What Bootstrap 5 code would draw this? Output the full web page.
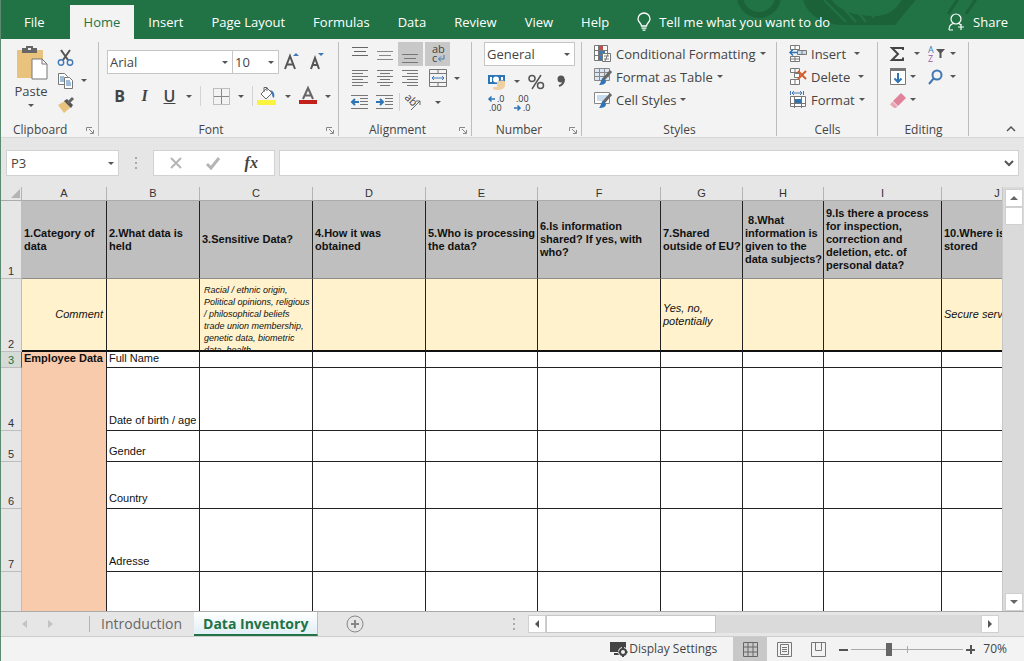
<!DOCTYPE html>
<html lang="en">
<head>
<meta charset="utf-8">
<meta name="viewport" content="width=device-width, initial-scale=1">
<title>Data Inventory</title>
<link href="https://cdn.jsdelivr.net/npm/bootstrap@5.3.0/dist/css/bootstrap.min.css" rel="stylesheet">
<style>
body { font-family: "Open Sans", "Noto Sans", sans-serif; font-size: 13px; line-height: 18px; color: #444; background: #e6e6e6; }
button, select, input { font: inherit; color: inherit; border: 0; background: none; padding: 0; }
svg { display: block; flex: none; overflow: visible; }
.app { border-left: 1px solid #5b8a70; }

/* title tabs */
.tabs-bar { background: #217346; height: 39px; }
.deco { z-index: 0; }
.tabs-bar .nav { z-index: 1; }
.tabs-bar .nav-link { color: #fff; padding: 8px 14px; line-height: 18px; border-radius: 0; }
.tabs-bar .nav-link.active { background: #f3f3f3; color: #217346; }
.tabs-bar .nav-link.first-tab { padding-left: 23px; padding-right: 25px; }

/* ribbon */
.ribbon { background: #f3f3f3; height: 99px; padding: 3px 0 0; border-bottom: 1px solid #d8d8d8; }
.group { flex: none; background: linear-gradient(#bdbdbd, #bdbdbd) right top / 1px 94px no-repeat; }
.group-body { height: 81px; flex: none; }
.group-name { font-size: 12px; line-height: 14px; }
.launch { right: 5px; bottom: 0; }
.w-clip { width: 98px; } .w-font { width: 240px; } .w-align { width: 133px; } .w-num { width: 110px; }
.w-styles { width: 195px; } .w-cells { width: 101px; } .w-edit { width: 91px; }
.caret { width: 0; height: 0; border: 3px solid transparent; border-top-color: #555; border-bottom: 0; flex: none; display: inline-block; }
.vsep { width: 1px; height: 20px; background: #d4d4d4; }
.box { background-color: #fff; border: 1px solid #c6c6c6; appearance: none; border-radius: 0; padding: 0 2px; height: 24px;
  background-image: url("data:image/svg+xml,%3Csvg xmlns='http://www.w3.org/2000/svg' width='6' height='3'%3E%3Cpath d='M0 0h6L3 3z' fill='%23555'/%3E%3C/svg%3E"); background-repeat: no-repeat; background-position: right 4px center; }
.box-font { width: 126px; } .box-size { width: 47px; margin-left: -1px; } .box-num { width: 91px; }
.ink { color: #444; font-size: 16px; line-height: 20px; width: 25px; }
.align-grid { display: grid; grid-template-columns: 25px 25px 26px 29px 10px; grid-auto-rows: 24px; justify-items: center; align-items: center; }
.align-grid button { height: 24px; display: grid; place-items: center; width: 25px; }
.pressed { background: #c8c8c8; }
.tool-row { height: 23px; white-space: nowrap; }
.edit-grid { display: grid; grid-template-columns: 38px 38px; grid-auto-rows: 23px; align-items: center; }

/* formula bar */
.formula-bar { height: 49px; padding: 12px 5px 11px 5px; }
.white-box { background: #fff; border: 1px solid #d2d2d2; height: 26px; }
.name-box { width: 113px; } .fx-box { width: 122px; }
.name-box input { width: 80px; }
.dots { color: #aaa; width: 34px; }

/* sheet */
.sheet-area { min-height: 0; }
.sheet-view { min-width: 0; }
.sheet { table-layout: fixed; width: 1052px; border-collapse: separate; border-spacing: 0; font-family: "Liberation Sans", Arial, sans-serif; font-size: 11px; line-height: 13px; color: #111; }
.sheet th, .sheet td { padding: 0 0 0 2px; border-right: 1px solid #222; border-bottom: 1px solid #222; }
.sheet td { background: #fff; vertical-align: bottom; padding-bottom: 3px; white-space: nowrap; }
.sheet thead th { font-weight: 400; height: 14px; line-height: 13px; padding: 0; text-align: center; background: #e6e6e6; border-bottom-color: #ababab; border-right-color: #b4b4b4; color: #333; }
.sheet tbody th { font-weight: 400; background: #e6e6e6; border-color: #bdbdbd; padding: 0; text-align: center; vertical-align: bottom; color: #333; }
.sheet tbody th.picked { background: #d5dcd7; color: #217346; border-right-color: #217346; }
.sheet .titles td { background: #bfbfbf; font-weight: 700; vertical-align: middle; border-bottom-color: #8c8c8c; padding-bottom: 0; }
.sheet .notes td { background: #fff2cc; font-style: italic; vertical-align: middle; border-bottom: 2px solid #111; padding-bottom: 0; }
.sheet .notes .fine { font-size: 9px; line-height: 12px; height: 66px; margin-top: 5px; padding-left: 2px; overflow: hidden; }
.sheet td.staff { background: #f8cbad; font-weight: 700; vertical-align: top; }
.sheet .note-right { text-align: right; padding-right: 3px; }
.sheet .h3r td { padding-bottom: 2px; }
.h1r { height: 78px; } .h2r { height: 73px; } .h3r { height: 16px; } .h4r { height: 63px; }
.h5r { height: 31px; } .h6r { height: 47px; } .h7r { height: 63px; } .h8r { height: 63px; }
.vbar { width: 22px; background: #dadada; border-left: 1px solid #c6c6c6; padding: 2px 2px 0; flex: none; }
.bar-btn { background: #fff; border: 1px solid #d0d0d0; width: 18px; height: 18px; display: grid; place-items: center; flex: none; }

/* sheet tabs */
.sheet-tabs { height: 26px; border-top: 1px solid #ababab; border-bottom: 1px solid #cdcdcd; background: #e6e6e6; }
.sheet-tabs .nav-link { color: #666; font-size: 14px; line-height: 20px; padding: 2px 12px 0 11px; border-radius: 0; height: 24px; }
.sheet-tabs .nav-link.active { background: linear-gradient(#fff, #e2eff5); color: #217346; font-weight: 700; border-right: 1px solid #bdbdbd; border-bottom: 2px solid #217346; padding: 2px 9px 0; }
.arrows { width: 89px; padding-left: 21px; gap: 20px; border-right: 1px solid #b4b4b4; }
.hbar { width: 46%; margin-right: 25px; }
.htrack { background: #dadada; height: 18px; }
.hthumb { width: 39%; height: 18px; background: #fff; border: 1px solid #c6c6c6; }

/* status bar */
.status { height: 24px; background: #f3f3f3; font-size: 12px; padding-right: 17px; }
.view-btn { width: 34px; height: 24px; display: grid; place-items: center; }
.zoom-range { appearance: none; width: 112px; height: 16px; margin: 0 3px; background: linear-gradient(#aaa, #aaa) 50% 50% / 1px 7px no-repeat, linear-gradient(#aaa, #aaa) center / 100% 1px no-repeat; }
.zoom-range::-webkit-slider-thumb { appearance: none; width: 6px; height: 13px; background: #666; }
</style>
<script src="https://cdn.jsdelivr.net/npm/bootstrap@5.3.0/dist/js/bootstrap.bundle.min.js"></script>
</head>
<body>
<div class="app d-flex flex-column vh-100 overflow-hidden">

<header class="tabs-bar position-relative d-flex align-items-end overflow-hidden flex-shrink-0">
  <svg class="deco position-absolute top-0 end-0" width="344" height="39" fill="none" stroke="#1c6239">
    <path d="M60-4a19 19 0 0 0 38 0" stroke-width="6"/><path d="M122-4c4 20 22 30 48 29h45l24-29h-16c-4 12-14 20-28 20-22 0-38-6-46-20z" fill="#1c6239" stroke="none"/>
    <path d="M144 0l22 22M156 0l20 22M168 0l18 22M180 0l14 18M192 0l10 14" stroke="#217346" stroke-width="2"/><path d="M268 14l12-18M286 14l12-18" stroke-width="3"/>
  </svg>
  <nav class="nav flex-nowrap position-relative">
    <a class="nav-link first-tab" href="#">File</a>
    <a class="nav-link active" href="#">Home</a>
    <a class="nav-link" href="#">Insert</a>
    <a class="nav-link" href="#">Page Layout</a>
    <a class="nav-link" href="#">Formulas</a>
    <a class="nav-link" href="#">Data</a>
    <a class="nav-link" href="#">Review</a>
    <a class="nav-link" href="#">View</a>
    <a class="nav-link" href="#">Help</a>
    <a class="nav-link d-flex align-items-center gap-2" href="#">
      <svg width="14" height="18" fill="none" stroke="#fff" stroke-width="1.3"><path d="M4.500 13c0-3-3.500-3.500-3.500-7a6 6 0 0 1 12 0c0 3.500-3.500 4-3.500 7zM4.500 15.200h5M5.500 17.200h3"/></svg>Tell me what you want to do</a>
  </nav>
  <a class="nav-link position-relative ms-auto d-flex align-items-center gap-2 text-white pe-3" href="#">
    <svg width="17" height="18" fill="none" stroke="#fff" stroke-width="1.200"><circle cx="8" cy="6" r="5"/><path d="M1 17c0-4 2-6 4.500-6.500M11 10.500l2 1.500M13 11v6M10 14h6M1 17h4"/></svg>Share</a>
</header>

<section class="ribbon d-flex flex-shrink-0" aria-label="Ribbon">
  <div class="group w-clip d-flex flex-column position-relative">
    <div class="group-body d-flex">
      <button class="d-flex flex-column align-items-center ms-2 me-1 pt-1" style="width:44px">
        <svg width="34" height="36"><path d="M3 4h26v28H3z" fill="#e9c27d"/><path d="M8 2h4V0h7v2h4v5H8z" fill="#666"/><path d="M14 2h3v2h-3z" fill="#eee"/><path d="M18 13h10l5 5v15H18z" fill="#fff" stroke="#777"/><path d="M28 13v5h5" fill="none" stroke="#777"/></svg>
        <span>Paste</span><span class="caret mt-1"></span>
      </button>
      <div class="d-flex flex-column pt-1">
        <button class="tool-row" aria-label="Cut"><svg width="18" height="18" fill="none"><path d="M4 1l7 10M13 1L6 11" stroke="#555" stroke-width="2"/><circle cx="4" cy="13.500" r="2.700" stroke="#3f78b5" stroke-width="1.400"/><circle cx="13" cy="13.500" r="2.700" stroke="#3f78b5" stroke-width="1.400"/></svg></button>
        <button class="tool-row d-flex align-items-center gap-2" aria-label="Copy"><svg width="16" height="18" fill="#fff" stroke="#777"><path d="M1.500 1.500h6l3 3v8h-9z"/><path d="M3 5h4M3 7h4M3 9h4" stroke="#3f78b5"/><path d="M7.500 5.500h5l3 3v8h-8z"/><path d="M9 9h4M9 11h5M9 13h5" stroke="#3f78b5"/></svg><span class="caret"></span></button>
        <button class="tool-row" aria-label="Format painter"><svg width="18" height="20"><path d="M1 11l7-4 6 6-7 6z" fill="#e9c27d"/><path d="M7 7l3-2 6 6-2 3z" fill="#555"/><path d="M11 9l5-5" stroke="#666" stroke-width="3"/></svg></button>
      </div>
    </div>
    <div class="group-name ps-2"><span class="ps-1">Clipboard</span></div>
    <svg class="launch position-absolute" width="8" height="14" fill="none" stroke="#888"><path d="M.5 8V4.500H6M3 6l4 4M7.500 7v3.500H4"/></svg>
  </div>

  <div class="group w-font d-flex flex-column position-relative">
    <div class="group-body px-2 pt-2">
      <div class="d-flex align-items-center">
        <select class="box box-font" aria-label="Font"><option>Arial</option></select>
        <select class="box box-size" aria-label="Font size"><option>10</option></select>
        <button class="ink" aria-label="Increase font size"><svg width="17" height="18" class="m-auto"><path d="M2 16L7 3l5 13M4 11.500h6" fill="none" stroke="#555" stroke-width="2"/><path d="M10 3l3-3 3 3z" fill="#3f78b5"/></svg></button>
        <button class="ink" aria-label="Decrease font size"><svg width="17" height="18" class="m-auto"><path d="M3 16L7 5l4 11M4.500 12h5" fill="none" stroke="#555" stroke-width="2"/><path d="M10 0l3 3 3-3z" fill="#3f78b5"/></svg></button>
      </div>
      <div class="d-flex align-items-center pt-2 mt-1">
        <button class="ink fw-bold">B</button>
        <button class="ink fst-italic fw-bold" style="font-family:'Liberation Serif',serif">I</button>
        <button class="ink text-decoration-underline fw-semibold">U</button>
        <span class="caret ms-1"></span><span class="vsep mx-2"></span>
        <button class="px-1" aria-label="Borders"><svg width="17" height="17" fill="none" stroke="#888"><path d="M.5.5h16v16H.5z" stroke-dasharray="1 1"/><path d="M8.500 1v15M1 8.500h15"/></svg></button>
        <span class="caret ms-1"></span><span class="vsep ms-2 me-1"></span>
        <button aria-label="Fill colour"><svg width="20" height="20"><path d="M0 14h19v5H0z" fill="#fbf43c"/><path d="M4 8l6-6 5 5-6 6zM7 6V1.500h3V5" fill="#fff" stroke="#666"/><path d="M13 4c4 1 5 4 4 8-2-1-2-3-2-5z" fill="#3f78b5"/></svg></button>
        <span class="caret ms-2"></span>
        <button class="ms-2" aria-label="Font colour"><svg width="18" height="20"><path d="M4 13L9 2l5 11M6 9.500h6" fill="none" stroke="#666" stroke-width="2"/><path d="M0 14h18v4H0z" fill="#c3201c"/></svg></button>
        <span class="caret ms-2"></span>
      </div>
    </div>
    <div class="group-name text-center pe-3">Font</div>
    <svg class="launch position-absolute" width="8" height="14" fill="none" stroke="#888"><path d="M.5 8V4.500H6M3 6l4 4M7.500 7v3.500H4"/></svg>
  </div>

  <div class="group w-align d-flex flex-column position-relative">
    <div class="group-body ps-2">
      <div class="align-grid">
        <button aria-label="Top align"><svg width="16" height="16" stroke="#666"><path d="M0 1.500h16M2 5.500h12M0 9.500h16"/></svg></button>
        <button aria-label="Middle align"><svg width="16" height="16" stroke="#888"><path d="M0 5.500h16M2 9.500h12M0 13.500h16"/></svg></button>
        <button class="pressed" aria-label="Bottom align"><svg width="16" height="18" stroke="#777"><path d="M0 9.500h16M2 13.500h12M0 17.500h16"/></svg></button>
        <button class="pressed" aria-label="Wrap text"><svg width="18" height="20" font-size="11" fill="#444"><text x="3" y="9">ab</text><text x="3" y="18">c</text><path d="M15 11v4h-5M12 12.500L9.500 15l2.500 2.500" fill="none" stroke="#3f78b5"/></svg></button><span></span>
        <button aria-label="Align left"><svg width="16" height="18" stroke="#777"><path d="M0 1.500h16M0 4.500h11M0 7.500h16M0 10.500h11M0 13.500h16M0 16.500h11"/></svg></button>
        <button aria-label="Centre"><svg width="16" height="18" stroke="#777"><path d="M0 1.500h16M3 4.500h10M0 7.500h16M3 10.500h10M0 13.500h16M3 16.500h10"/></svg></button>
        <button aria-label="Align right"><svg width="16" height="18" stroke="#777"><path d="M0 1.500h16M5 4.500h11M0 7.500h16M5 10.500h11M0 13.500h16M5 16.500h11"/></svg></button>
        <button aria-label="Merge"><svg width="18" height="18" fill="none" stroke="#777"><path d="M.5.5h17v17H.5zM.5 4.500h17M.5 13.500h17M9 0v4M9 14v4"/><path d="M3 9h12M5 7L3 9l2 2M13 7l2 2-2 2" stroke="#3f78b5"/></svg></button><span class="caret"></span>
        <button aria-label="Decrease indent"><svg width="17" height="16" stroke="#777"><path d="M0 1.500h17M9 4.500h8M9 7.500h8M9 10.500h8M0 14.500h17"/><path d="M8 8H1M4 5L1 8l3 3" fill="none" stroke="#2e75b6" stroke-width="2"/></svg></button>
        <button aria-label="Increase indent"><svg width="17" height="16" stroke="#777"><path d="M0 1.500h17M9 4.500h8M9 7.500h8M9 10.500h8M0 14.500h17"/><path d="M0 8h7M4 5l3 3-3 3" fill="none" stroke="#2e75b6" stroke-width="2"/></svg></button>
        <button aria-label="Orientation"><svg width="24" height="18"><path d="M1.500 0v18" stroke="#d4d4d4"/><text x="6" y="9" font-size="11" fill="#444" transform="rotate(45 11 7)">ab</text><path d="M13 17l9-9M18 8h4v4" fill="none" stroke="#666"/></svg></button>
        <span class="caret"></span>
      </div>
    </div>
    <div class="group-name text-center pe-3">Alignment</div>
    <svg class="launch position-absolute" width="8" height="14" fill="none" stroke="#888"><path d="M.5 8V4.500H6M3 6l4 4M7.500 7v3.500H4"/></svg>
  </div>

  <div class="group w-num d-flex flex-column position-relative">
    <div class="group-body ps-2">
      <select class="box box-num ms-1" aria-label="Number format"><option>General</option></select>
      <div class="d-flex align-items-center gap-2 tool-row ps-1 mt-1">
        <button class="ps-1" aria-label="Currency"><svg width="18" height="18"><path d="M0 2h17v9H0z" fill="#2e75b6"/><circle cx="8" cy="6.500" r="3" fill="#fff"/><path d="M2 4h2v5H2zM13 4h2v3h-2z" fill="#fff"/><path d="M9 9c3-2 8-2 8 0v4c-1 4-8 5-12 3v-2h4z" fill="#f0cfa0"/></svg></button>
        <span class="caret"></span>
        <button aria-label="Percent"><svg width="17" height="16" fill="none" stroke="#555" stroke-width="1.500"><circle cx="4" cy="4.500" r="3"/><circle cx="12.500" cy="11.500" r="3"/><path d="M13 1L4 15"/></svg></button>
        <button class="ps-1" aria-label="Comma"><svg width="8" height="14"><circle cx="4" cy="4" r="3.500" fill="#555"/><path d="M7 4c0 4-2 6-5 7" fill="none" stroke="#555" stroke-width="2"/></svg></button>
      </div>
      <div class="d-flex gap-2 ps-1">
        <button class="ps-1" aria-label="Increase decimal"><svg width="18" height="20" font-size="9" fill="#333"><text x="9" y="9">.0</text><text x="1" y="18">.00</text><path d="M7 6H1M3.500 3.500L1 6l2.500 2.500" stroke="#2e75b6" stroke-width="1.500" fill="none"/></svg></button>
        <button aria-label="Decrease decimal"><svg width="18" height="20" font-size="9" fill="#333"><text x="2" y="9">.00</text><text x="9" y="18">.0</text><path d="M0 15h6M3.500 12.500L6 15l-2.500 2.500" stroke="#2e75b6" stroke-width="1.500" fill="none"/></svg></button>
      </div>
    </div>
    <div class="group-name text-center pe-3">Number</div>
    <svg class="launch position-absolute" width="8" height="14" fill="none" stroke="#888"><path d="M.5 8V4.500H6M3 6l4 4M7.500 7v3.500H4"/></svg>
  </div>

  <div class="group w-styles d-flex flex-column">
    <div class="group-body d-flex flex-column align-items-start ps-2">
      <button class="tool-row d-flex align-items-center ps-1"><svg width="18" height="18" fill="#fff" stroke="#777"><path d="M.5.5h13v15H.5zM4.500.5v15M.5 5.500h13M.5 10.500h13"/><path d="M5 1h4v4H5z" fill="#c0504d" stroke="none"/><path d="M5 6h6v4H5zM5 11h3v4H5z" fill="#3f78b5" stroke="none"/><path d="M8.500 8.500h8v8h-8z"/><path d="M10 11h5M10 14h5M14 9l-3 7"/></svg><span class="ps-1">Conditional Formatting</span><span class="caret ms-1"></span></button>
      <button class="tool-row d-flex align-items-center ps-1"><svg width="18" height="18"><path d="M.5.5h15v12H.5zM.5 4.500h15M.5 8.500h15M5.500.5v12M10.500.5v12" fill="#dbe7f3" stroke="#888"/><path d="M17 3L9 12" stroke="#666" stroke-width="3"/><path d="M9 10l3 3c0 3-3 4-7 4 2-2 2-6 4-7z" fill="#2e75b6"/></svg><span class="ps-1">Format as Table</span><span class="caret ms-1"></span></button>
      <button class="tool-row d-flex align-items-center ps-1"><svg width="18" height="18"><path d="M.5 1.500h15v11H.5z" fill="#fff" stroke="#888"/><path d="M3 4h10v6H3z" fill="#c9dcee"/><path d="M17 3L9 12" stroke="#666" stroke-width="3"/><path d="M9 10l3 3c0 3-3 4-7 4 2-2 2-6 4-7z" fill="#2e75b6"/></svg><span class="ps-1">Cell Styles</span><span class="caret ms-1"></span></button>
    </div>
    <div class="group-name text-center">Styles</div>
  </div>

  <div class="group w-cells d-flex flex-column">
    <div class="group-body d-flex flex-column align-items-start ps-2">
      <button class="tool-row d-flex align-items-center ps-1"><svg width="18" height="18" fill="#fff" stroke="#777"><path d="M1.500.5h9v4h-9zM6 .5v4M1.500 11.500h9v5h-9zM6 11.500v5M1.500 14h9"/><path d="M8.500 5.500h9v4h-9zM13 5.500v4" fill="#c9dcee"/><path d="M8 7.500H1M4 4.500l-3 3 3 3" fill="none" stroke="#2e75b6" stroke-width="1.500"/></svg><span class="ps-1">Insert</span><span class="caret ms-2"></span></button>
      <button class="tool-row d-flex align-items-center ps-1"><svg width="18" height="18" fill="#fff" stroke="#777"><path d="M1.500.5h9v4h-9zM6 .5v4M1.500 11.500h9v5h-9zM6 11.500v5M5.500 5.500h5v4h-5z"/><path d="M9 3l8 8M17 3l-8 8" stroke="#d35c2b" stroke-width="2"/></svg><span class="ps-1">Delete</span><span class="caret ms-2"></span></button>
      <button class="tool-row d-flex align-items-center ps-1"><svg width="18" height="18" fill="#fff" stroke="#777"><path d="M1.500 5.500h15v10h-15zM5.500 5v12M12.500 5v12M2 12.500h14"/><path d="M6 8h6v4H6z" fill="#2e75b6" stroke="none"/><path d="M1.500 0v4M14.500 0v4M3 2h10M5 0L3 2l2 2M11 0l2 2-2 2" fill="none" stroke="#3f78b5"/></svg><span class="ps-1">Format</span><span class="caret ms-1"></span></button>
    </div>
    <div class="group-name text-center">Cells</div>
  </div>

  <div class="group w-edit d-flex flex-column">
    <div class="group-body ps-2">
      <div class="edit-grid ps-1">
        <button class="d-flex align-items-center gap-2" aria-label="Sum"><svg width="16" height="16"><path d="M13 4V2H2l6 6-6 6h11v-2.500" fill="none" stroke="#444" stroke-width="2"/></svg><span class="caret"></span></button>
        <button class="d-flex align-items-center gap-1" aria-label="Sort"><svg width="18" height="18" font-size="9"><text x="0" y="8" fill="#3f78b5">A</text><text x="0" y="17" fill="#9a58b0">Z</text><path d="M8 4h9l-3.500 4v5h-2V8z" fill="#555"/></svg><span class="caret"></span></button>
        <button class="d-flex align-items-center gap-1" aria-label="Fill"><svg width="16" height="17" fill="#fff"><path d="M.5.5h15v16H.5z" stroke="#777"/><path d="M0 0h16v3H0z" fill="#777"/><path d="M8 5v9M4.500 10.500L8 14l3.500-3.500" fill="none" stroke="#2e75b6" stroke-width="2"/></svg><span class="caret"></span></button>
        <button class="d-flex align-items-center gap-1" aria-label="Find"><svg width="18" height="16" fill="none" stroke="#3f78b5" stroke-width="2"><circle cx="9" cy="6" r="4.500"/><path d="M6 9l-5 6"/></svg><span class="caret"></span></button>
        <button class="d-flex align-items-center gap-1" aria-label="Clear"><svg width="16" height="16"><path d="M11 1l5 5-8 8-5-5z" fill="#e0829a"/><path d="M2.500 9.500l5 5-1.500 1.500H4l-4-3.500z" fill="#eaa5b5"/></svg><span class="caret"></span></button>
      </div>
    </div>
    <div class="group-name text-center">Editing</div>
  </div>
  <button class="ms-auto align-self-end pe-2 pb-1" aria-label="Collapse the ribbon"><svg width="10" height="8" fill="none" stroke="#555" stroke-width="1.500"><path d="M1 6l4-4 4 4"/></svg></button>
</section>

<section class="formula-bar d-flex align-items-center flex-shrink-0" aria-label="Formula bar">
  <div class="white-box name-box d-flex align-items-center justify-content-between px-1"><input aria-label="Name box" value="P3"><span class="caret"></span></div>
  <div class="dots d-flex justify-content-center"><svg width="3" height="13" fill="#aaa"><path d="M0 0h2v2H0zM0 5h2v2H0zM0 10h2v2H0z"/></svg></div>
  <div class="white-box fx-box d-flex align-items-center justify-content-around px-1">
    <button aria-label="Cancel"><svg width="12" height="12" stroke="#b5b5b5" stroke-width="2"><path d="M1 1l10 10M11 1L1 11"/></svg></button>
    <button aria-label="Enter"><svg width="14" height="12" fill="none" stroke="#b5b5b5" stroke-width="3"><path d="M1 7l4 4L13 1"/></svg></button>
    <button class="fst-italic fw-bold fs-6" style="font-family:'Liberation Serif',serif">fx</button>
  </div>
  <div class="white-box flex-fill d-flex align-items-center ms-1 px-1"><input class="flex-fill" aria-label="Formula"><svg width="10" height="8" fill="none" stroke="#555" stroke-width="2"><path d="M1 2l4 4 4-4"/></svg></div>
</section>

<main class="sheet-area flex-fill d-flex">
  <div class="sheet-view flex-fill overflow-hidden">
    <table class="sheet">
      <colgroup><col style="width:21px"><col style="width:85px"><col style="width:93px"><col style="width:113px"><col style="width:113px"><col style="width:112px"><col style="width:123px"><col style="width:82px"><col style="width:81px"><col style="width:118px"><col style="width:111px"></colgroup>
      <thead><tr><th aria-label="Select all"><svg width="10" height="9" class="ms-auto"><path d="M9 0v9H0z" fill="#b4b4b4"/></svg></th><th>A</th><th>B</th><th>C</th><th>D</th><th>E</th><th>F</th><th>G</th><th>H</th><th>I</th><th>J</th></tr></thead>
      <tbody>
        <tr class="titles h1r"><th>1</th><td>1.Category of<br>data</td><td>2.What data is<br>held</td><td>3.Sensitive Data?</td><td>4.How it was<br>obtained</td><td>5.Who is processing<br>the data?</td><td>6.Is information<br>shared? If yes, with<br>who?</td><td>7.Shared<br>outside of EU?</td><td>&nbsp;8.What<br>information is<br>given to the<br>data subjects?</td><td>9.Is there a process<br>for inspection,<br>correction and<br>deletion, etc. of<br>personal data?</td><td>10.Where is it<br>stored</td></tr>
        <tr class="notes h2r"><th>2</th><td class="note-right">Comment</td><td></td><td><div class="fine">Racial / ethnic origin,<br>Political opinions, religious<br>/ philosophical beliefs<br>trade union membership,<br>genetic data, biometric<br>data, health</div></td><td></td><td></td><td></td><td>Yes, no,<br>potentially</td><td></td><td></td><td>Secure servers</td></tr>
        <tr class="h3r"><th class="picked">3</th><td class="staff" rowspan="6">Employee Data</td><td>Full Name</td><td></td><td></td><td></td><td></td><td></td><td></td><td></td><td></td></tr>
        <tr class="h4r"><th>4</th><td>Date of birth / age</td><td></td><td></td><td></td><td></td><td></td><td></td><td></td><td></td></tr>
        <tr class="h5r"><th>5</th><td>Gender</td><td></td><td></td><td></td><td></td><td></td><td></td><td></td><td></td></tr>
        <tr class="h6r"><th>6</th><td>Country</td><td></td><td></td><td></td><td></td><td></td><td></td><td></td><td></td></tr>
        <tr class="h7r"><th>7</th><td>Adresse</td><td></td><td></td><td></td><td></td><td></td><td></td><td></td><td></td></tr>
        <tr class="h8r"><th></th><td></td><td></td><td></td><td></td><td></td><td></td><td></td><td></td><td></td></tr>
      </tbody>
    </table>
  </div>
  <div class="vbar d-flex flex-column">
    <button class="bar-btn" aria-label="Scroll up"><svg width="8" height="4"><path d="M0 4h8L4 0z" fill="#666"/></svg></button>
    <div class="bar-btn"></div>
    <button class="bar-btn mt-auto" aria-label="Scroll down"><svg width="8" height="4"><path d="M0 0h8L4 4z" fill="#666"/></svg></button>
  </div>
</main>

<nav class="sheet-tabs d-flex flex-shrink-0" aria-label="Sheets">
  <div class="arrows d-flex align-items-center my-1"><svg width="6" height="8"><path d="M5 0v8L0 4z" fill="#c2c2c2"/></svg><svg width="6" height="8"><path d="M0 0v8l5-4z" fill="#c2c2c2"/></svg></div>
  <div class="nav flex-nowrap"><a class="nav-link" href="#">Introduction</a><a class="nav-link active" href="#">Data Inventory</a></div>
  <button class="ms-4" aria-label="New sheet"><svg width="18" height="18" fill="none" stroke="#888" class="ms-1"><circle cx="9" cy="9" r="8"/><path d="M5 9h8M9 5v8" stroke-width="2"/></svg></button>
  <div class="ms-auto d-flex align-items-center pe-2 me-1"><svg width="3" height="13" fill="#aaa"><path d="M0 0h2v2H0zM0 5h2v2H0zM0 10h2v2H0z"/></svg></div>
  <div class="hbar d-flex align-items-center">
    <button class="bar-btn" aria-label="Scroll left"><svg width="4" height="8"><path d="M4 0v8L0 4z" fill="#555"/></svg></button>
    <div class="htrack flex-fill"><div class="hthumb"></div></div>
    <button class="bar-btn" aria-label="Scroll right"><svg width="4" height="8"><path d="M0 0v8l4-4z" fill="#555"/></svg></button>
  </div>
</nav>

<footer class="status d-flex align-items-center justify-content-end flex-shrink-0">
  <button class="d-flex align-items-center me-3"><svg width="19" height="16"><path d="M0 1h16v10H0zM4 12h6v2H4z" fill="#444"/><circle cx="13" cy="11" r="5" fill="#f3f3f3"/><circle cx="13" cy="11" r="3" fill="none" stroke="#444" stroke-width="2" /><path d="M13 6v2M13 14v2M8.500 11h2M15.500 11h2" stroke="#444" stroke-width="2"/></svg>Display Settings</button>
  <button class="view-btn pressed" aria-label="Normal view"><svg width="15" height="15" fill="none" stroke="#666"><path d="M.5.5h14v14H.5zM5 0v15M10 0v15M0 5h15M0 10h15"/></svg></button>
  <button class="view-btn" aria-label="Page layout view"><svg width="15" height="15" fill="none" stroke="#777"><path d="M.5.5h14v14H.5zM3.500 2.500h8v10h-8zM5 5.500h5M5 7.500h5M5 9.500h5"/></svg></button>
  <button class="view-btn" aria-label="Page break view"><svg width="15" height="15" fill="none" stroke="#777"><path d="M.5.5h14v14H.5zM4.500 0v8.500h6V0"/></svg></button>
  <button class="ps-1" aria-label="Zoom out"><svg width="9" height="9"><path d="M0 4h9v2H0z" fill="#555"/></svg></button>
  <input class="zoom-range" type="range" aria-label="Zoom" min="0" max="100" value="33">
  <button aria-label="Zoom in"><svg width="9" height="9"><path d="M0 4h9v2H0zM4 0h2v9H4z" fill="#555"/></svg></button>
  <span class="ms-2">70%</span>
</footer>
</div>
</body>
</html>
